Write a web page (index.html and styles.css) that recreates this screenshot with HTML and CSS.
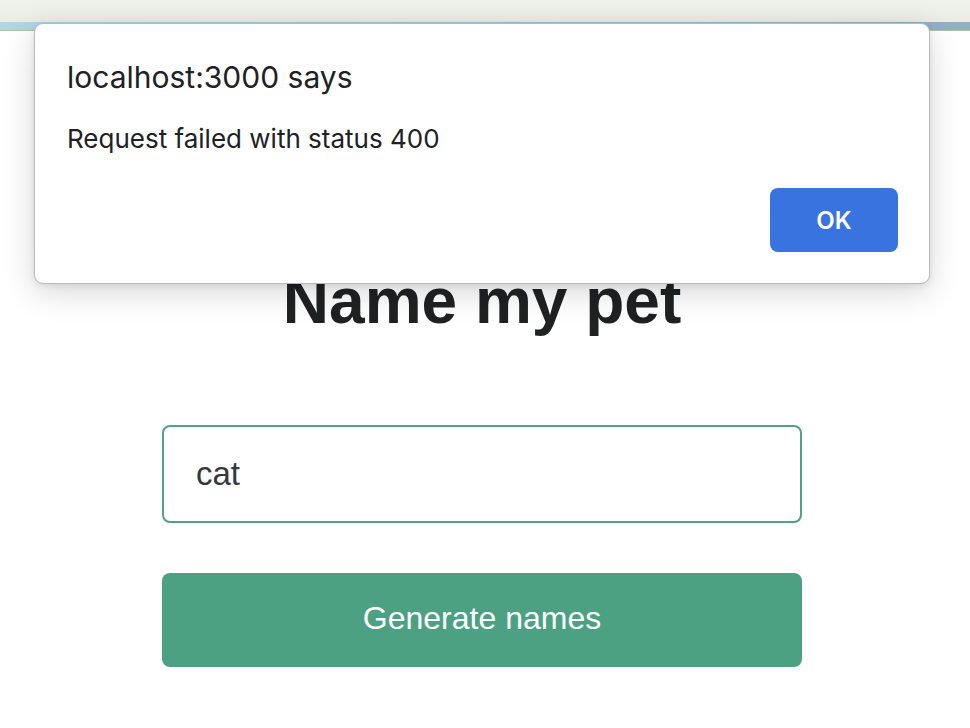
FILE: index.html
```html
<!DOCTYPE html>
<html lang="en">
<head>
<meta charset="utf-8">
<title>Name my pet</title>
<link rel="stylesheet" href="styles.css">
</head>
<body>
<div class="chrome"></div>
<div class="progress"></div>
<main class="main">
  <h3 class="title">Name my pet</h3>
  <form class="form">
    <input class="field" type="text" name="animal" value="cat">
    <button class="submit" type="button">Generate names</button>
  </form>
</main>
<div class="dialog" role="alertdialog">
  <div class="dialog-title">localhost:3000 says</div>
  <div class="dialog-message">Request failed with status 400</div>
  <div class="dialog-actions">
    <button class="dialog-ok" type="button">OK</button>
  </div>
</div>
</body>
</html>
```

FILE: styles.css
```css
html, body {
  margin: 0;
  padding: 0;
  background: #ffffff;
}

body {
  width: 970px;
  height: 728px;
  overflow: hidden;
  position: relative;
  font-family: "Liberation Sans", Arial, sans-serif;
}

.chrome {
  height: 22px;
  background: linear-gradient(#f0f2ec, #eaece5);
}

.progress {
  height: 8px;
  background: linear-gradient(to right, #b2d5ea, #9dc0d8 60%, #90b0c8);
  border-bottom: 1px solid #b7bfa2;
}

.main {
  display: flex;
  flex-direction: column;
  align-items: center;
  padding: 230px 6px 0 0;
}

.title {
  font-family: "Liberation Sans", Arial, sans-serif;
  font-size: 64px;
  line-height: 80px;
  font-weight: bold;
  color: #202123;
  margin: 0 0 84px;
}

.form {
  display: flex;
  flex-direction: column;
  width: 640px;
}

.field {
  box-sizing: border-box;
  height: 98px;
  padding: 0 32px;
  border: 2px solid #4fa285;
  border-radius: 8px;
  margin: 0 0 50px;
  font-family: "Liberation Sans", Arial, sans-serif;
  font-size: 33px;
  color: #353740;
  outline: none;
  background: #fff;
}

.submit {
  box-sizing: border-box;
  height: 94px;
  padding: 0 0 3px;
  border: none;
  border-radius: 8px;
  background: #4ba182;
  color: #ffffff;
  font-family: "Liberation Sans", Arial, sans-serif;
  font-size: 32px;
  text-align: center;
}

.dialog {
  position: absolute;
  left: 34px;
  top: 23px;
  width: 896px;
  height: 261px;
  box-sizing: border-box;
  background: #ffffff;
  border: 1px solid #b9b9b9;
  border-radius: 9px;
  box-shadow: 0 8px 32px rgba(0, 0, 0, 0.16), 0 2px 6px rgba(0, 0, 0, 0.08);
  padding: 35px 31px 31px 32px;
  display: flex;
  flex-direction: column;
  font-family: Inter, "Liberation Sans", sans-serif;
  color: #202124;
}

.dialog-title {
  font-size: 30px;
  line-height: 36px;
}

.dialog-message {
  margin-top: 28px;
  font-size: 26px;
  line-height: 32px;
}

.dialog-actions {
  margin-top: auto;
  display: flex;
  justify-content: flex-end;
}

.dialog-ok {
  width: 128px;
  height: 64px;
  border: none;
  border-radius: 8px;
  background: #3873e0;
  color: #ffffff;
  font-family: Inter, "Liberation Sans", sans-serif;
  font-size: 24px;
  font-weight: 600;
}
```
